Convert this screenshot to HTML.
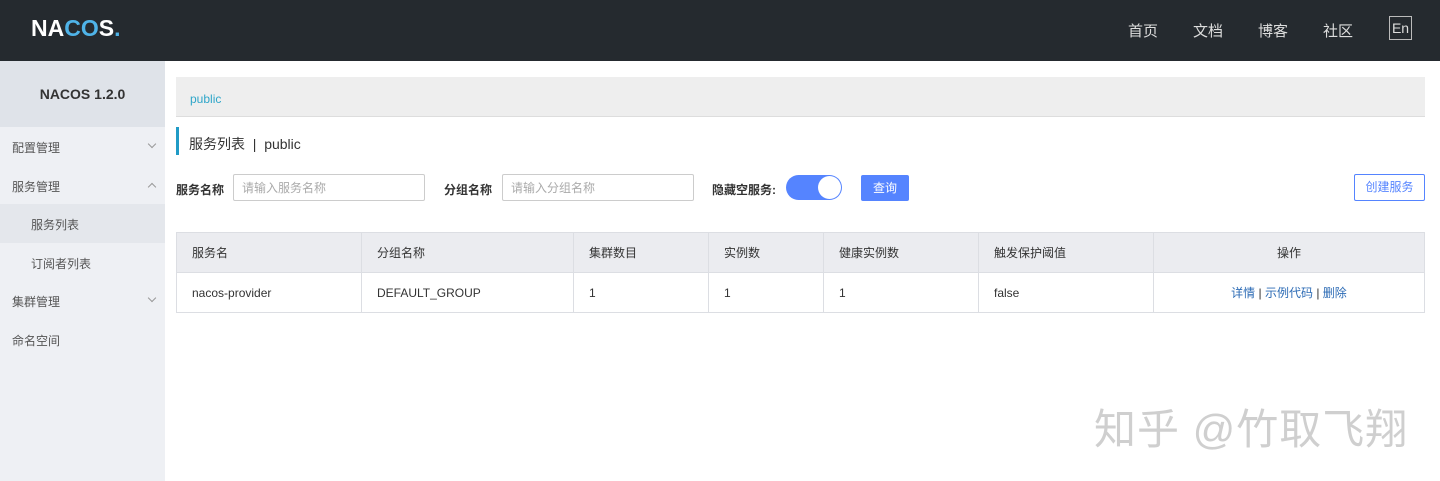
<!DOCTYPE html>
<html><head><meta charset="utf-8"><style>
*{margin:0;padding:0;box-sizing:border-box}
body{width:1440px;height:481px;overflow:hidden;background:#fff;font-family:"Liberation Sans","Noto Sans CJK SC",sans-serif;color:#333;font-size:12px;position:relative}
.hdr{position:absolute;left:0;top:0;width:1440px;height:61px;background:#252a2f}
.logo{position:absolute;left:31px;top:15px;color:#fff;font-size:23px;font-weight:bold}
.nav{position:absolute;top:20px;color:#ddd;font-size:15px}
.en{position:absolute;left:1389px;top:16px;width:23px;height:24px;border:1px solid #bbb;color:#ddd;font-size:14px;text-align:center;line-height:22px}
.side{position:absolute;left:0;top:61px;width:165px;height:420px;background:#eef0f4}
.ver{height:66px;background:#dfe3e9;text-align:center;line-height:66px;font-weight:bold;font-size:14px;color:#333}
.mi{height:38.5px;line-height:42px;padding-left:12px;font-size:12px;color:#555;position:relative}
.mi.sub{padding-left:31px}
.mi.sel{background:#e4e7ec}
.arr{position:absolute;right:10px;top:14px;width:6px;height:6px;border-right:1px solid #999;border-bottom:1px solid #999;transform:rotate(45deg)}
.arr.up{transform:rotate(-135deg);top:18px}
.bc{position:absolute;left:176px;top:77px;width:1249px;height:40px;background:#eeeeee;border-bottom:1px solid #ddd;color:#2fa6c9;padding-left:14px;line-height:44px;font-size:12px}
.title{position:absolute;left:176px;top:127px;height:28px;border-left:3px solid #209bc6;padding-left:10px;line-height:34px;font-size:14px;color:#333}
.lbl{position:absolute;top:181px;font-size:12px;color:#333;font-weight:bold}
.inp{position:absolute;top:174px;width:192px;height:27px;border:1px solid #ccc;border-radius:2px;color:#aaa;padding-left:8px;line-height:27px;font-size:12px}
.tog{position:absolute;left:786px;top:175px;width:56px;height:25px;border-radius:13px;background:#5584ff}
.tog i{position:absolute;right:1px;top:1px;width:23px;height:23px;border-radius:50%;background:#fff}
.btn{position:absolute;left:861px;top:175px;width:48px;height:26px;background:#5584ff;border-radius:2px;color:#fff;text-align:center;line-height:26px}
.btn2{position:absolute;left:1354px;top:174px;width:71px;height:27px;border:1px solid #5584ff;border-radius:2px;color:#5584ff;text-align:center;line-height:25px}
table{position:absolute;left:176px;top:232px;width:1249px;border-collapse:collapse;font-size:12px}
td,th{border:1px solid #dcdee3;text-align:left;font-weight:normal;padding-left:15px;height:40px}
th{background:#ebecf0;color:#333}
a{color:#2c6bb5;text-decoration:none}
.wm{position:absolute;left:1094px;top:396px;font-size:42px;color:#cfcfcf;letter-spacing:1px}
</style></head><body>
<div class="hdr"><div class="logo">NA<span style="color:#4fb3e8">CO</span>S<span style="color:#4fb3e8">.</span></div>
<div class="nav" style="left:1128px">首页</div><div class="nav" style="left:1193px">文档</div><div class="nav" style="left:1258px">博客</div><div class="nav" style="left:1323px">社区</div><div class="en">En</div></div>
<div class="side"><div class="ver">NACOS 1.2.0</div>
<div class="mi">配置管理<span class="arr"></span></div>
<div class="mi">服务管理<span class="arr up"></span></div>
<div class="mi sub sel">服务列表</div>
<div class="mi sub">订阅者列表</div>
<div class="mi">集群管理<span class="arr"></span></div>
<div class="mi">命名空间</div></div>
<div class="bc">public</div>
<div class="title">服务列表 &nbsp;|&nbsp; public</div>
<div class="lbl" style="left:176px">服务名称</div><div class="inp" style="left:233px">请输入服务名称</div>
<div class="lbl" style="left:444px">分组名称</div><div class="inp" style="left:502px">请输入分组名称</div>
<div class="lbl" style="left:712px">隐藏空服务:</div><div class="tog"><i></i></div>
<div class="btn">查询</div><div class="btn2">创建服务</div>
<table><tr><th style="width:185px">服务名</th><th style="width:212px">分组名称</th><th style="width:135px">集群数目</th><th style="width:115px">实例数</th><th style="width:155px">健康实例数</th><th style="width:175px">触发保护阈值</th><th style="text-align:center;padding:0">操作</th></tr>
<tr><td>nacos-provider</td><td>DEFAULT_GROUP</td><td>1</td><td>1</td><td>1</td><td>false</td><td style="text-align:center;padding:0"><a>详情</a> | <a>示例代码</a> | <a>删除</a></td></tr></table>
<div class="wm">知乎 @竹取飞翔</div>
</body></html>
